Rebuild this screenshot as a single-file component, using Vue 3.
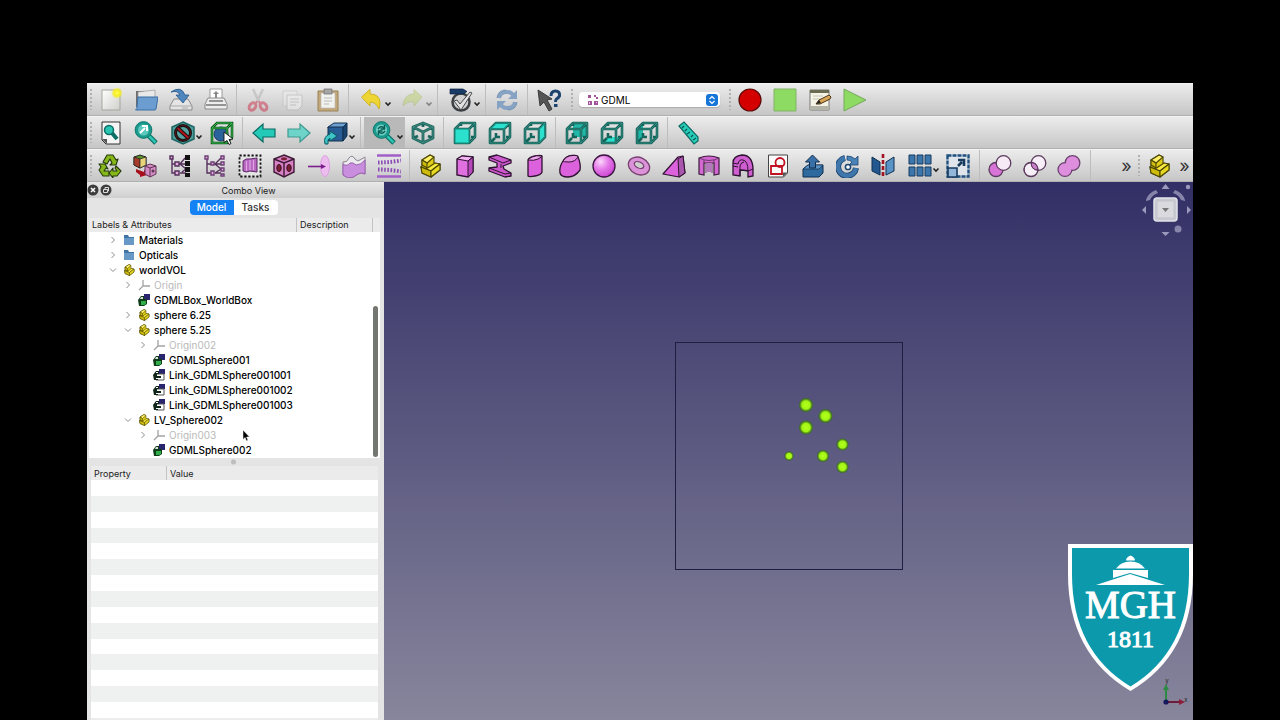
<script setup>
    import { ref } from 'vue';

    const workbench = ref('GDML');
    const activeTab = ref('Model');

    const fileBar = [
        { icon: 'new', label: 'New' },
        { icon: 'open', label: 'Open' },
        { icon: 'save', label: 'Save' },
        { icon: 'print', label: 'Print' },
        { sep: true },
        { icon: 'cut', label: 'Cut', off: true },
        { icon: 'copy', label: 'Copy', off: true },
        { icon: 'paste', label: 'Paste' },
        { sep: true },
        { icon: 'undo', label: 'Undo', drop: true },
        { icon: 'redo', label: 'Redo', drop: true, off: true },
        { sep: true },
        { icon: 'check', label: 'Edit mode', drop: true },
        { sep: true },
        { icon: 'refresh', label: 'Refresh' },
        { sep: true },
        { icon: 'whats', label: 'What is this' },
    ];

    const macroBar = [
        { icon: 'record', label: 'Record macro' },
        { icon: 'stop', label: 'Stop macro' },
        { icon: 'macros', label: 'Macros' },
        { icon: 'play', label: 'Run macro' },
    ];

    const viewBar = [
        { icon: 'fitall', label: 'Fit all' },
        { icon: 'fitsel', label: 'Fit selection' },
        { icon: 'style', label: 'Draw style', drop: true },
        { icon: 'bbox', label: 'Bounding box' },
        { sep: true },
        { icon: 'back', label: 'Back' },
        { icon: 'forward', label: 'Forward' },
        { icon: 'linkto', label: 'Go to linked object', drop: true },
        { sep: true },
        { icon: 'sync', label: 'Sync view', drop: true, on: true },
        { icon: 'iso', label: 'Isometric' },
        { sep: true },
        { icon: 'front', label: 'Front' },
        { icon: 'top', label: 'Top' },
        { icon: 'right', label: 'Right' },
        { sep: true },
        { icon: 'rear', label: 'Rear' },
        { icon: 'bottom', label: 'Bottom' },
        { icon: 'left', label: 'Left' },
        { sep: true },
        { icon: 'measure', label: 'Measure' },
    ];

    const gdmlBar = [
        { icon: 'cycle', label: 'Cycle' },
        { icon: 'expand', label: 'Expand' },
        { icon: 'treeblack', label: 'Expand max' },
        { icon: 'treepink', label: 'Expand one' },
        { icon: 'mesh', label: 'Mesh' },
        { icon: 'dice', label: 'Tessellate' },
        { icon: 'ray', label: 'Ray' },
        { icon: 'surface', label: 'Surface' },
        { icon: 'lines', label: 'Lines' },
        { sep: true },
        { icon: 'part', label: 'Part' },
        { icon: 'box', label: 'Box' },
        { icon: 'xtru', label: 'Extruded' },
        { icon: 'tube', label: 'Elliptical tube' },
        { icon: 'cone', label: 'Elliptical cone' },
        { icon: 'sphere', label: 'Sphere' },
        { icon: 'torus', label: 'Torus' },
        { icon: 'wedge', label: 'Wedge' },
        { icon: 'arch', label: 'Tube segment' },
        { icon: 'bend', label: 'Torus segment' },
        { icon: 'sketch', label: 'Sketch' },
        { icon: 'extrude', label: 'Extrude' },
        { icon: 'revolve', label: 'Revolve' },
        { icon: 'mirror', label: 'Mirror' },
        { icon: 'array', label: 'Array', drop: true },
        { icon: 'scale', label: 'Scale' },
        { sep: true },
        { icon: 'cutop', label: 'Cut solids' },
        { icon: 'common', label: 'Intersection' },
        { icon: 'union', label: 'Union' },
        { sep: true },
    ];

    const tree = [
        { depth: 0, twist: 'closed', icon: 'folder', text: 'Materials' },
        { depth: 0, twist: 'closed', icon: 'folder', text: 'Opticals' },
        { depth: 0, twist: 'open', icon: 'part', text: 'worldVOL' },
        { depth: 1, twist: 'closed', icon: 'origin', text: 'Origin', dim: true },
        { depth: 1, icon: 'solid', text: 'GDMLBox_WorldBox' },
        { depth: 1, twist: 'closed', icon: 'part', text: 'sphere 6.25' },
        { depth: 1, twist: 'open', icon: 'part', text: 'sphere 5.25' },
        { depth: 2, twist: 'closed', icon: 'origin', text: 'Origin002', dim: true },
        { depth: 2, icon: 'solid', text: 'GDMLSphere001' },
        { depth: 2, icon: 'link', text: 'Link_GDMLSphere001001' },
        { depth: 2, icon: 'link', text: 'Link_GDMLSphere001002' },
        { depth: 2, icon: 'link', text: 'Link_GDMLSphere001003' },
        { depth: 1, twist: 'open', icon: 'part', text: 'LV_Sphere002' },
        { depth: 2, twist: 'closed', icon: 'origin', text: 'Origin003', dim: true },
        { depth: 2, icon: 'solid', text: 'GDMLSphere002' },
    ];

    const spheres = [
        { x: 131, y: 63, r: 7 },
        { x: 150.5, y: 74, r: 7 },
        { x: 131, y: 85.5, r: 7 },
        { x: 167.5, y: 102.5, r: 6 },
        { x: 148, y: 114, r: 6 },
        { x: 167.5, y: 125, r: 6 },
        { x: 114, y: 114, r: 4.5 },
    ];
</script>

<template>
    <svg class="sprites" aria-hidden="true">
        <defs>
            <linearGradient id="g-paper" x1="0" y1="0" x2="1" y2="1">
                <stop offset="0" stop-color="#fff" /><stop offset="1" stop-color="#cfcfcb" />
            </linearGradient>
            <radialGradient id="g-ball" cx=".35" cy=".3" r=".8">
                <stop offset="0" stop-color="#fbd6fb" /><stop offset=".45" stop-color="#e579e8" /><stop offset="1" stop-color="#c63ccd" />
            </radialGradient>
            <radialGradient id="g-green">
                <stop offset="0" stop-color="#b4ff1c" /><stop offset=".6" stop-color="#a0f414" /><stop offset=".78" stop-color="#5f9a1c" /><stop offset="1" stop-color="#35602c" />
            </radialGradient>
            <radialGradient id="g-spark">
                <stop offset="0" stop-color="#fffb60" /><stop offset=".5" stop-color="#f5ee20" /><stop offset="1" stop-color="#f5ee20" stop-opacity="0" />
            </radialGradient>
        </defs>

        <symbol id="i-new" viewBox="0 0 24 24">
            <path d="M3 2h18v20H3z" fill="url(#g-paper)" stroke="#a5a5a0" />
            <circle cx="18" cy="5" r="6" fill="url(#g-spark)" />
        </symbol>
        <symbol id="i-open" viewBox="0 0 24 24">
            <path d="M2 3h8l1 2h9v14H2z" fill="#6d6d6d" />
            <path d="M4 4l17-2v9H4z" fill="#e9e9e9" stroke="#999" stroke-width=".7" />
            <path d="M4 9h20l-2 12q-.3 1-1 1H1.500q2-1 1.500-4z" fill="#6c9dd0" stroke="#3a6ea5" />
        </symbol>
        <symbol id="i-save" viewBox="0 0 24 24">
            <path d="M5 11h14l4 7v4H1v-4z" fill="#e4e4e4" stroke="#8b8b8b" />
            <path d="M2 18h20M13 20h6" stroke="#aaa" />
            <path d="M2 4Q12-3 16 7h4l-6 8-7-8h4Q9 2 2 4z" fill="#4f86bd" stroke="#26568a" stroke-width=".8" />
        </symbol>
        <symbol id="i-print" viewBox="0 0 24 24">
            <path d="M6 1h12v11H6z" fill="#fff" stroke="#999" />
            <path d="M12 3l3 3h-2v4h-2V6H9z" fill="#888" />
            <path d="M4 10h16l3 6v5H1v-5z" fill="#eee" stroke="#8a8a8a" />
            <path d="M5 13h14M2 17h20" stroke="#777" stroke-width="1.5" />
        </symbol>
        <symbol id="i-cut" viewBox="0 0 24 24">
            <path d="M7 1l6 13M17 1l-6 13" stroke="#aaa" stroke-width="2.5" />
            <path d="M11 13l-1 3M13 13l1 3" stroke="#cc1d38" stroke-width="2" />
            <ellipse cx="6.5" cy="18.5" rx="3" ry="4" transform="rotate(35 6.5 18.5)" fill="none" stroke="#cc1d38" stroke-width="3" />
            <ellipse cx="17.5" cy="18.5" rx="3" ry="4" transform="rotate(-35 17.5 18.5)" fill="none" stroke="#cc1d38" stroke-width="3" />
        </symbol>
        <symbol id="i-copy" viewBox="0 0 24 24">
            <path d="M2 3h14v15H2z" fill="#eee" stroke="#bbb" />
            <path d="M6 7h15v11l-4 4H6z" fill="#f6f6f6" stroke="#aaa" />
            <path d="M9 11h9M9 14h9M9 17h6" stroke="#aaa" />
        </symbol>
        <symbol id="i-paste" viewBox="0 0 24 24">
            <path d="M2 3h20v20H2z" fill="#c2a97c" stroke="#998257" />
            <path d="M5 5h14v15H5z" fill="#f1f1ee" stroke="#bbb" stroke-width=".6" />
            <path d="M8 1h8v5H8z" fill="#a5a5a5" stroke="#777" stroke-width=".8" />
            <path d="M8 10h8M8 13h8M8 16h5" stroke="#bbb" />
        </symbol>
        <symbol id="i-undo" viewBox="0 0 24 24">
            <path d="M1.500 9L10 1.500v4.500q9 0 10 8 0 4-1 7-3-7-9-7v4z" fill="#edd634" stroke="#d0b224" stroke-linejoin="round" />
        </symbol>
        <symbol id="i-redo" viewBox="0 0 24 24">
            <path d="M21 9L13 1.500v4.500q-10 0-11 12 4-5 11-4v4z" fill="#b8cf62" stroke="#9db655" stroke-linejoin="round" />
        </symbol>
        <symbol id="i-check" viewBox="0 0 24 24">
            <circle cx="12" cy="14" r="8.5" fill="#cfcfcf" stroke="#3c4043" stroke-width="2.5" />
            <path d="M1 1h13l4 2.500L14 6H1z" fill="#183a66" stroke="#0e2443" stroke-width=".7" />
            <path d="M5 13l3-1 3 4L21 4l2 1-11 17z" fill="#e2e2e2" stroke="#4a4a4a" />
        </symbol>
        <symbol id="i-refresh" viewBox="0 0 24 24">
            <path d="M4 10q1-6 8-6 4 0 6 3M20 14q-1 6-8 6-4 0-6-3" fill="none" stroke="#86a3c4" stroke-width="4" />
            <path d="M22 2v9h-9zM2 22v-9h9z" fill="#86a3c4" />
            <path d="M2 10q1-8 9-8M22 14q-1 8-9 8" fill="none" stroke="#6685aa" stroke-width=".8" />
        </symbol>
        <symbol id="i-whats" viewBox="0 0 24 24">
            <path d="M14 8q0-5 4.500-5t4 5q-1 2-3 3-1 1-1 3" fill="none" stroke="#1d436e" stroke-width="3" />
            <path d="M17 16h3.500v3H17z" fill="#1d436e" />
            <path d="M1 2l14 9-5 1 5 9-3 2-5-9-4 4z" fill="#555" stroke="#3b3b3b" />
        </symbol>
        <symbol id="i-wb" viewBox="0 0 12 12">
            <path d="M1 1h3v3H1zM7 1h2v2H7zM9 3h2v2H9zM1 7h4v4H1zM7 7h4v4H7z" fill="#a0559a" />
            <path d="M2 8h1v2H2zM9 8h1v1H9z" fill="#eec1e8" />
        </symbol>
        <symbol id="i-record" viewBox="0 0 24 24"><circle cx="12" cy="12" r="11" fill="#d40000" stroke="#5c0a0a" stroke-width="1.2" /></symbol>
        <symbol id="i-stop" viewBox="0 0 24 24"><path d="M1 1h22v22H1z" fill="#8edb63" stroke="#82b367" /></symbol>
        <symbol id="i-macros" viewBox="0 0 24 24">
            <path d="M2 2h19v20H2z" fill="#f4f3e6" stroke="#777" />
            <path d="M2 2h19v3H2z" fill="#6b6b52" />
            <path d="M2 18h19v4H2z" fill="#b3b3a8" />
            <path d="M5 8h10M5 11h7" stroke="#c5c5b8" />
            <path d="M8 16l3-4L21 7l2 2-1 2-10 5z" fill="#d8a556" stroke="#4b3416" />
            <path d="M8 16l3-4 2 3z" fill="#222" />
        </symbol>
        <symbol id="i-play" viewBox="0 0 24 24"><path d="M1 1l22 11L1 23z" fill="#8edb63" stroke="#75a85c" /></symbol>

        <symbol id="i-fitall" viewBox="0 0 24 24">
            <path d="M3 1h18v22H7l-4-4z" fill="#f5f5f5" stroke="#333" />
            <path d="M3 18l5 5v-5z" fill="#555" />
            <path d="M13 12l5 6" stroke="#0c6f64" stroke-width="4" />
            <circle cx="10" cy="9" r="4.5" fill="#2bc4b3" stroke="#0c6f64" stroke-width="1.5" />
        </symbol>
        <symbol id="i-fitsel" viewBox="0 0 24 24">
            <path d="M14 14l8 8" stroke="#0c6f64" stroke-width="5" />
            <path d="M14.500 14.500l7 7" stroke="#2bc4b3" stroke-width="2.5" />
            <circle cx="9.5" cy="9" r="7" fill="#5cc9be" stroke="#1a9a8d" stroke-width="3" />
            <circle cx="9.5" cy="9" r="8.4" fill="none" stroke="#0c6f64" stroke-width=".8" />
            <path d="M6 12l5-5M8 5h5v5" fill="none" stroke="#fff" stroke-width="2" />
        </symbol>
        <symbol id="i-style" viewBox="0 0 24 24">
            <path d="M12 1l11 5v12l-11 5L1 18V6z" fill="#4f9d9b" stroke="#1c6663" stroke-width="1.5" />
            <circle cx="12" cy="12" r="7.5" fill="#57a29f" stroke="#111" stroke-width="3" />
            <path d="M6.500 7l11 10" stroke="#111" stroke-width="4" />
            <path d="M6.500 7l11 10" stroke="#b3151d" stroke-width="2" />
            <circle cx="12" cy="12" r="7.5" fill="none" stroke="#5c1418" stroke-width="1" />
        </symbol>
        <symbol id="i-bbox" viewBox="0 0 24 24">
            <circle cx="11" cy="13" r="7" fill="#2a629c" stroke="#143a66" />
            <path d="M2 7l5-5h15v14l-5 6H2zM2 7h15v15M17 7l5-5" fill="none" stroke="#0c5a1c" stroke-width="2.6" />
            <path d="M2 7l5-5h15v14l-5 6H2zM2 7h15v15M17 7l5-5" fill="none" stroke="#36b84a" stroke-width="1" />
            <path d="M14 11l9 7-4 .5 2 4-2 1-2-4-3 2z" fill="#fff" stroke="#111" stroke-width=".9" />
        </symbol>
        <symbol id="i-back" viewBox="0 0 24 24"><path d="M1 12L11 3v5h12v8H11v5z" fill="#25c9b8" stroke="#0b6b62" stroke-width="1.2" /></symbol>
        <symbol id="i-forward" viewBox="0 0 24 24"><path d="M23 12L13 3v5H1v8h12v5z" fill="#6ed3c9" stroke="#3e9990" stroke-width="1.2" /></symbol>
        <symbol id="i-linkto" viewBox="0 0 24 24">
            <path d="M4 6l6-4h13l-4 5H4z" fill="#6fa0d0" stroke="#12304f" />
            <path d="M4 6h15v14H4z" fill="#275d94" stroke="#12304f" />
            <path d="M19 6l4-4v13l-4 5z" fill="#19426e" stroke="#12304f" />
            <path d="M1 23q-2-8 5-10v-3l7 5-7 5v-3q-3 1-2 6z" fill="#3cc6c8" stroke="#0b5a62" />
        </symbol>
        <symbol id="i-sync" viewBox="0 0 24 24">
            <path d="M14 14l8 8" stroke="#0c6f64" stroke-width="5" />
            <path d="M14.500 14.500l7 7" stroke="#2bc4b3" stroke-width="2.5" />
            <circle cx="9.5" cy="9" r="7" fill="#6fd0c6" stroke="#1a9a8d" stroke-width="3" />
            <circle cx="9.5" cy="9" r="8.4" fill="none" stroke="#0c6f64" stroke-width=".8" />
            <path d="M6 8q3-4 6-1M13 10q-3 4-6 1M12.500 4v4h-4M6.500 14v-4h4" fill="none" stroke="#0a5c54" stroke-width="1.4" />
        </symbol>
        <symbol id="i-iso" viewBox="0 0 24 24">
            <path d="M12 2l10 4v11l-10 5-10-5V6zM2 6l10 5 10-5M12 11v11M12 2v4M2 17l5-2M22 17l-5-2" fill="none" stroke="#1d665d" stroke-width="2.8" stroke-linejoin="round" />
            <path d="M12 2l10 4v11l-10 5-10-5V6zM2 6l10 5 10-5M12 11v11" fill="none" stroke="#4d9a90" stroke-width=".7" />
        </symbol>
        <symbol id="cube" viewBox="0 0 24 24">
            <path d="M2 8h14v14H2zM2 8l6-6h14l-6 6M22 2v14l-6 6M8 2v3M8 12v4h4M18 16h4M7 17l-5 5" fill="none" stroke="#14665c" stroke-width="2.6" stroke-linejoin="round" />
            <path d="M2 8h14v14H2zM2 8l6-6h14l-6 6M22 2v14l-6 6" fill="none" stroke="#3f968b" stroke-width=".7" />
        </symbol>
        <symbol id="i-front" viewBox="0 0 24 24"><use href="#cube" /><path d="M2 8h14v14H2z" fill="#2be0cc" stroke="#158a7d" /></symbol>
        <symbol id="i-top" viewBox="0 0 24 24"><use href="#cube" /><path d="M3 7.500l5-5h13l-5 5z" fill="#2be0cc" stroke="#158a7d" /></symbol>
        <symbol id="i-right" viewBox="0 0 24 24"><use href="#cube" /><path d="M16.500 8l5-5v12.500l-5 5.500z" fill="#2be0cc" stroke="#158a7d" /></symbol>
        <symbol id="i-rear" viewBox="0 0 24 24"><path d="M8 3h14v13H8z" fill="#21b8a8" /><use href="#cube" /></symbol>
        <symbol id="i-bottom" viewBox="0 0 24 24"><path d="M2 22l6-6h14l-6 6z" fill="#2be0cc" /><use href="#cube" /></symbol>
        <symbol id="i-left" viewBox="0 0 24 24"><path d="M2 8l6-6v14l-6 6z" fill="#21b8a8" /><use href="#cube" /></symbol>
        <symbol id="i-measure" viewBox="0 0 24 24">
            <path d="M2 5l5-4 14 15v4l-4 3z" fill="#27cdbb" stroke="#0b6b62" stroke-width="1.2" />
            <path d="M7 5l-2 2M10 8l-2 2M13 11l-3 2M16 14l-2 2M19 17l-3 2" stroke="#07544c" stroke-width="1.2" />
        </symbol>

        <symbol id="i-cycle" viewBox="0 0 24 24">
            <g fill="#86b81c" stroke="#23380a" stroke-width="1.1" stroke-linejoin="round">
                <path d="M5 8l4-7h6l3 5 2-1-2 6h-6l2-2-2-4-3 5z" />
                <path d="M1 10h6l3 5-2-1-2 3H11v5H5l-4-6 2-3z" />
                <path d="M18 12l5 5-4 5h-4v2l-4-5 4-5v3h4l-2-3z" />
            </g>
        </symbol>
        <symbol id="i-expand" viewBox="0 0 24 24">
            <path d="M1 3l6-2 6 2v8l-6 3-6-3z" fill="#5a8f2c" stroke="#222" />
            <path d="M1 3l6 2v9l-6-3z" fill="#a83a2a" stroke="#222" stroke-width=".7" />
            <path d="M7 5l6-2v8l-6 3z" fill="#e6d37a" stroke="#222" stroke-width=".7" />
            <path d="M3 15l8 3v-3l3 6-7 2v-2l-4-3z" fill="#a80f1c" />
            <path d="M12 12l5-2 6 2v8l-6 3-5-3z" fill="#d58bc4" stroke="#5f3456" />
            <path d="M12 12l5 2 6-2M17 14v9" fill="none" stroke="#5f3456" />
            <circle cx="20" cy="17" r="1.5" fill="#5b3a55" />
        </symbol>
        <symbol id="i-treeblack" viewBox="0 0 24 24">
            <path d="M4 4v15h5M4 10h14M12 10l5-6M12 10l6 5M12 19h6M14 18l4-3" fill="none" stroke="#55305c" stroke-width="1.4" />
            <path d="M2 2h3v3H2zM7 8h4v4H7zM7 17h4v4H7z" fill="#e3b0dd" stroke="#55305c" stroke-width="1.4" />
            <path d="M18 2h3v3h-3zM18 8h3v3h-3zM18 14h3v3h-3zM18 20h3v2h-3z" fill="#111" stroke="#111" stroke-width="2" />
        </symbol>
        <symbol id="i-treepink" viewBox="0 0 24 24">
            <path d="M4 4v15h5M4 10h14M12 10l6-6M12 10l6 5M12 19l6-4M12 19h6" fill="none" stroke="#55305c" stroke-width="1.4" />
            <path d="M2 2h3v3H2zM8 8h3v3H8zM8 17h3v4H8zM18 2h3v3h-3zM18 8h3v3h-3zM18 14h3v3h-3zM18 20h3v2h-3z" fill="#e3b0dd" stroke="#6d3f76" stroke-width="1.4" />
        </symbol>
        <symbol id="i-mesh" viewBox="0 0 24 24">
            <path d="M1.500 1.500h21v21h-21z" fill="#e4e4e4" stroke="#111" stroke-width="1.8" stroke-dasharray="2.2 1.8" />
            <path d="M5 7q3-3 7-2l7-1v14l-7-1q-4 2-7 0z" fill="#b867c0" stroke="#5c2a66" />
            <path d="M8.500 7v10M12 6v10M15.500 6v10" stroke="#dfa3e4" stroke-width="1.2" />
        </symbol>
        <symbol id="i-dice" viewBox="0 0 24 24">
            <path d="M12 1l10 4v13l-10 5L2 18V5z" fill="#d780c3" stroke="#3d1a35" stroke-width="1.4" />
            <path d="M2 5l10 4 10-4M12 9v14" fill="none" stroke="#3d1a35" stroke-width="1.4" />
            <ellipse cx="12" cy="4.8" rx="3" ry="1.5" fill="#7a1f35" />
            <ellipse cx="7" cy="14" rx="2.2" ry="3.6" fill="#7a1f35" stroke="#3d0f1c" />
            <ellipse cx="17" cy="14" rx="2.2" ry="3.6" fill="#7a1f35" stroke="#3d0f1c" />
        </symbol>
        <symbol id="i-ray" viewBox="0 0 24 24">
            <ellipse cx="18" cy="12" rx="4.5" ry="10.5" fill="#eebdf0" stroke="#dda0e2" />
            <path d="M1 12.500h15" stroke="#7b1f8e" stroke-width="1.6" /><path d="M14 10l5 2.500-5 2.500z" fill="#7b1f8e" />
        </symbol>
        <symbol id="i-surface" viewBox="0 0 24 24">
            <path d="M1 8q4 1 6-4 3-4 6 1 2 3 5 1l5-3v17q-4-2-7 0-4 4-10 4l-5-3z" fill="#ececee" stroke="#8d8490" />
            <path d="M1 10q4 3 7-1 3-1 6 2 5 0 9-5v14q-4-2-7 0-4 4-10 4l-5-3z" fill="#ca8ede" stroke="#9a62b0" />
        </symbol>
        <symbol id="i-lines" viewBox="0 0 24 24">
            <path d="M0 1.500h24M0 22.500h24" stroke="#a35fc9" stroke-width="2.6" />
            <path d="M1 8.500Q12 8.500 24 6.500M1 15.500Q12 15.500 24 17.500" fill="none" stroke="#8a4ab5" stroke-width="4" stroke-dasharray="1.6 1.6" />
        </symbol>
        <symbol id="i-part" viewBox="0 0 24 24">
            <g stroke="#4a4503" stroke-width="1.1" stroke-linejoin="round">
                <path d="M4 6l8-5 4 2v6l6 1v6l-9 7-9-4-1-6 1-1z" fill="#e0cd17" />
                <path d="M4 6l8-5 4 2-7 6z" fill="#fff06a" />
                <path d="M4 6l5 3v5l-5-3z" fill="#cfbb0c" />
                <path d="M3 13l5 2 9-6 5 1-9 7z" fill="#f7e83f" />
                <path d="M3 13l10 4v6l-9-4z" fill="#cfbb0c" />
                <path d="M13 17l9-7v6l-9 7z" fill="#e8d823" />
            </g>
        </symbol>
        <symbol id="i-box" viewBox="0 0 24 24">
            <path d="M4 5l5-3 11 1v15l-5 5-11-2z" fill="#e070e0" stroke="#2e1030" stroke-width="1.4" />
            <path d="M4 5l5-3 11 1-5 4z" fill="#f4b4f2" stroke="#2e1030" />
            <path d="M15 7l5-4v15l-5 5z" fill="#b648ba" stroke="#2e1030" />
        </symbol>
        <symbol id="i-xtru" viewBox="0 0 24 24">
            <path d="M1 3l8-2 14 5v3l-8 3 1 3 7 4v3l-6 1L1 17v-3l8-1V9L1 6z" fill="#cb58cc" stroke="#2e1030" stroke-width="1.3" stroke-linejoin="round" />
            <path d="M1 3l14 6 8-3M1 14l16 6 6-1M13 10v4" fill="none" stroke="#2e1030" />
        </symbol>
        <symbol id="i-tube" viewBox="0 0 24 24">
            <path d="M5 6q1-3 7-4t7 0v16q-1 3-7 4t-7 0z" fill="#dc62dd" stroke="#2e1030" stroke-width="1.3" />
            <path d="M5 6q6 1 10-1t4-3q-6-1-10 1T5 6z" fill="#eea6ec" stroke="#2e1030" />
        </symbol>
        <symbol id="i-cone" viewBox="0 0 24 24">
            <path d="M5 7q3-5 9-5.500t6 1.500q3 7 2 13-5 7-12 7t-8-4q-1-6 3-12z" fill="#dc62dd" stroke="#2e1030" stroke-width="1.3" />
            <path d="M5 7q3-5 9-5.500t6 1.500q-3 5-9 5T5 7z" fill="#e48fe2" stroke="#2e1030" />
        </symbol>
        <symbol id="i-sphere" viewBox="0 0 24 24"><circle cx="12" cy="12" r="11" fill="url(#g-ball)" stroke="#3a1440" stroke-width="1.3" /></symbol>
        <symbol id="i-torus" viewBox="0 0 24 24">
            <ellipse cx="12" cy="12" rx="11" ry="8.5" transform="rotate(25 12 12)" fill="#dc92d8" stroke="#76416f" stroke-width="1.3" />
            <ellipse cx="12" cy="11" rx="5" ry="3" transform="rotate(25 12 11)" fill="#cfcfcf" stroke="#76416f" stroke-width="1.3" />
        </symbol>
        <symbol id="i-wedge" viewBox="0 0 24 24">
            <path d="M1 20L16 3l5-1 2 17-6 4z" fill="#dc62dd" stroke="#2e1030" stroke-width="1.2" stroke-linejoin="round" />
            <path d="M16 5l5-3 2 17-6 4z" fill="#a956ad" stroke="#2e1030" />
        </symbol>
        <symbol id="i-arch" viewBox="0 0 24 24">
            <path d="M2 4q10-4 20 0v16l-5 1V9H7v12l-5-1z" fill="#d468d3" stroke="#3a1b3b" stroke-width="1.2" />
            <path d="M2 4q10 5 20 0M7 9V6M17 9V6M9 9v10M15 9v10" fill="none" stroke="#6b3a6b" />
            <path d="M9 9h6v9H9z" fill="#b578bd" />
        </symbol>
        <symbol id="i-bend" viewBox="0 0 24 24">
            <path d="M2 9q0-7 9-8 10 0 11 13v8l-5 1v-6q-4-1-8-1v6l-7-1z" fill="#cf5fd0" stroke="#2e1030" stroke-width="1.3" />
            <path d="M2 9l5 1q1-5 5-4 5 1 5 11M9 22V12q1-4 4-4M2 12l5 1M17 17l5-2" fill="none" stroke="#2e1030" />
        </symbol>
        <symbol id="i-sketch" viewBox="0 0 24 24">
            <path d="M2.500 1h19v18l-4 4h-15z" fill="#fafafa" stroke="#444" />
            <path d="M17 23v-4.500h4.500z" fill="#555" />
            <path d="M5 12h11v8H5z" fill="none" stroke="#c11224" stroke-width="1.8" />
            <circle cx="14" cy="8.5" r="4.5" fill="none" stroke="#c11224" stroke-width="1.8" />
        </symbol>
        <symbol id="i-extrude" viewBox="0 0 24 24">
            <path d="M2 15l5-4h15v8l-4 4H2z" fill="#2f6a9f" stroke="#0f2f50" />
            <path d="M2 15l5-4h15l-4 4z" fill="#5d92c4" stroke="#0f2f50" stroke-width=".7" />
            <path d="M11.500 1l7 7h-4v6h-6V8h-4z" fill="#386fa6" stroke="#0f2f50" />
        </symbol>
        <symbol id="i-revolve" viewBox="0 0 24 24">
            <path d="M9 4A9 9 0 1 0 20 14" fill="none" stroke="#1c456f" stroke-width="6" />
            <path d="M9 4A9 9 0 1 0 20 14" fill="none" stroke="#3f77ac" stroke-width="4.4" />
            <path d="M11 2q5 0 8 3l3-3v9h-9l3-3q-2-2-5-2z" fill="#4a83b8" stroke="#1c456f" stroke-width=".8" />
            <circle cx="12" cy="13" r="2.6" fill="#fff" stroke="#1c456f" stroke-width="1.5" />
        </symbol>
        <symbol id="i-mirror" viewBox="0 0 24 24">
            <path d="M1 3l8 5v13l-8-4z" fill="#22588f" stroke="#0f2f50" />
            <path d="M23 3l-8 5v13l8-4z" fill="#5a93c6" stroke="#0f2f50" />
            <path d="M12 0v24" stroke="#a31222" stroke-width="2.6" stroke-dasharray="4 2" />
        </symbol>
        <symbol id="i-array" viewBox="0 0 24 24">
            <path d="M1 1h6v9H1zM9 1h6v9H9zM17 1h6v9h-6zM1 13h6v9H1zM9 13h6v9H9zM17 13h6v9h-6z" fill="#3b77ad" stroke="#173a5d" />
        </symbol>
        <symbol id="i-scale" viewBox="0 0 24 24">
            <path d="M1.500 1.500h21v21h-21z" fill="#dfe5ea" stroke="#1f507f" stroke-width="2.4" stroke-dasharray="4 1" />
            <path d="M2 14h9v9H2z" fill="#93b7d8" stroke="#173a5d" stroke-width="1.6" />
            <path d="M12 12l4-4M12 6h6v6" fill="none" stroke="#173a5d" stroke-width="2.6" />
        </symbol>
        <symbol id="i-cutop" viewBox="0 0 24 24">
            <circle cx="8" cy="15.5" r="7" fill="#d873d8" stroke="#5b3a5e" stroke-width="1.3" />
            <circle cx="15.5" cy="9" r="7.3" fill="#f7eaf7" stroke="#5b3a5e" stroke-width="1.3" />
        </symbol>
        <symbol id="i-common" viewBox="0 0 24 24">
            <circle cx="8" cy="15.5" r="7" fill="#f7eff7" stroke="#5b3a5e" stroke-width="1.3" />
            <circle cx="15.5" cy="9" r="7.3" fill="#f7eff7" stroke="#5b3a5e" stroke-width="1.3" />
            <path d="M8.300 8.500q6-.5 6.800 7.500-7 0-6.800-7.500z" fill="#c77fc9" stroke="#5b3a5e" />
            <circle cx="8" cy="15.5" r="7" fill="none" stroke="#5b3a5e" />
        </symbol>
        <symbol id="i-union" viewBox="0 0 24 24">
            <g stroke="#6b4370" stroke-width="2.6" fill="#dd8edd"><circle cx="8" cy="15.5" r="6.3" /><circle cx="15.5" cy="9" r="6.7" /></g>
            <g fill="#dd8edd"><circle cx="8" cy="15.5" r="6.3" /><circle cx="15.5" cy="9" r="6.7" /></g>
        </symbol>

        <symbol id="i-folder" viewBox="0 0 12 12">
            <path d="M1 1h4l1 2h5v8H1z" fill="#3f74a5" /><path d="M1 4h10v7H1z" fill="#6899c6" />
        </symbol>
        <symbol id="i-origin" viewBox="0 0 12 12">
            <path d="M5 1v6L1 11M5 7h7" fill="none" stroke="#a2a2a2" stroke-width="1.3" />
        </symbol>
        <symbol id="i-solid" viewBox="0 0 12 12">
            <path d="M6 0h6v6H6z" fill="#29246e" />
            <path d="M0 6l3-4h3v3h3v5l-3 2H1z" fill="#0e3d18" /><path d="M3 7h5v3l-2 1H3z" fill="#2fae4a" /><path d="M3 3h2v2H2z" fill="#ddd" />
        </symbol>
        <symbol id="i-link" viewBox="0 0 12 12">
            <path d="M6 0h6v5H6z" fill="#29246e" /><path d="M3 5h8v6H3z" fill="#fff" stroke="#555" />
            <path d="M0 6l3-4h3v3H4v2h4v2H5v2H1z" fill="#10251a" /><path d="M3 3h2v1H3zM3 9h2v1H3z" fill="#fff" />
        </symbol>
        <symbol id="i-chev" viewBox="0 0 8 6"><path d="M1.500 1.500L4 4l2.500-2.500" fill="none" stroke="#222" stroke-width="1.6" /></symbol>
    </svg>

    <main class="stage">
        <div class="window">
            <header>
                <div class="toolbar" role="toolbar" aria-label="File">
                    <span class="grip"></span>
                    <template v-for="(t, i) in fileBar" :key="i">
                        <span v-if="t.sep" class="sep"></span>
                        <button v-else class="tool" :class="{ drop: t.drop, off: t.off }" :aria-label="t.label">
                            <svg class="icon"><use :href="'#i-' + t.icon" /></svg>
                            <svg v-if="t.drop" class="chev"><use href="#i-chev" /></svg>
                        </button>
                    </template>
                    <span class="grip wide"></span>
                    <label class="workbench">
                        <svg class="wbIcon"><use href="#i-wb" /></svg>
                        <select v-model="workbench" aria-label="Workbench">
                            <option>GDML</option>
                        </select>
                        <svg class="stepper" viewBox="0 0 12 12">
                            <rect width="12" height="12" rx="3" fill="#1676d8" />
                            <path d="M3.500 5L6 2.500 8.500 5M3.500 7L6 9.500 8.500 7" fill="none" stroke="#fff" stroke-width="1.2" />
                        </svg>
                    </label>
                    <span class="grip"></span>
                    <button v-for="t in macroBar" :key="t.icon" class="tool" :aria-label="t.label">
                        <svg class="icon"><use :href="'#i-' + t.icon" /></svg>
                    </button>
                </div>

                <div class="toolbar" role="toolbar" aria-label="View">
                    <span class="grip"></span>
                    <template v-for="(t, i) in viewBar" :key="i">
                        <span v-if="t.sep" class="sep"></span>
                        <button v-else class="tool" :class="{ drop: t.drop, on: t.on }" :aria-label="t.label">
                            <svg class="icon"><use :href="'#i-' + t.icon" /></svg>
                            <svg v-if="t.drop" class="chev"><use href="#i-chev" /></svg>
                        </button>
                    </template>
                </div>

                <div class="toolbar" role="toolbar" aria-label="GDML">
                    <div class="fill">
                        <span class="grip"></span>
                        <template v-for="(t, i) in gdmlBar" :key="i">
                            <span v-if="t.sep" class="sep"></span>
                            <button v-else class="tool" :class="{ drop: t.drop }" :aria-label="t.label">
                                <svg class="icon"><use :href="'#i-' + t.icon" /></svg>
                                <svg v-if="t.drop" class="chev"><use href="#i-chev" /></svg>
                            </button>
                        </template>
                    </div>
                    <div class="overflow">
                        <button class="more" aria-label="More tools">»</button>
                        <span class="grip"></span>
                        <button class="tool" aria-label="Create part">
                            <svg class="icon"><use href="#i-part" /></svg>
                        </button>
                        <button class="more" aria-label="More part tools">»</button>
                    </div>
                </div>
            </header>

            <div class="body">
                <aside class="combo">
                    <div class="title">
                        <button aria-label="Close">
                            <svg viewBox="0 0 12 12"><circle cx="6" cy="6" r="5.5" fill="#3d3d3d" /><path d="M4 4l4 4M8 4L4 8" stroke="#fff" stroke-width="1.5" /></svg>
                        </button>
                        <button aria-label="Float">
                            <svg viewBox="0 0 12 12"><circle cx="6" cy="6" r="5.5" fill="#3d3d3d" /><path d="M3.500 5.500h4v3h-4zM5 5.500v-2h3.500v3.500h-1" fill="none" stroke="#ddd" /></svg>
                        </button>
                        <h2>Combo View</h2>
                    </div>
                    <div class="tabs" role="tablist">
                        <button
                        v-for="tab in ['Model', 'Tasks']"
                        :key="tab"
                        role="tab"
                        :aria-selected="activeTab === tab"
                        :class="{ active: activeTab === tab }"
                        @click="activeTab = tab">{{ tab }}</button>
                    </div>

                    <div class="treeHead">
                        <span>Labels &amp; Attributes</span>
                        <span>Description</span>
                    </div>
                    <div class="treeBox">
                        <ul class="tree">
                            <li v-for="node in tree" :key="node.text" :class="['depth' + node.depth, { dim: node.dim }]">
                                <button v-if="node.twist" class="twist" :class="node.twist" :aria-label="'Toggle ' + node.text">
                                    <svg viewBox="0 0 8 8"><path d="M2.500 1L5.500 4l-3 3" fill="none" stroke="#8c8c8c" /></svg>
                                </button>
                                <span v-else class="twist"></span>
                                <svg class="nodeIcon"><use :href="'#i-' + node.icon" /></svg>
                                <span>{{ node.text }}</span>
                            </li>
                        </ul>
                        <div class="track"><div class="thumb"></div></div>
                    </div>

                    <div class="splitter"></div>

                    <div class="props">
                        <table>
                            <thead>
                                <tr><th>Property</th><th>Value</th></tr>
                            </thead>
                            <tbody>
                                <tr v-for="n in 15" :key="n"><td></td><td></td></tr>
                            </tbody>
                        </table>
                    </div>
                </aside>

                <section class="view" aria-label="3D view">
                    <svg class="scene" viewBox="0 0 228 228">
                        <rect x=".5" y=".5" width="227" height="227" fill="none" stroke="#201d42" />
                        <circle v-for="(s, i) in spheres" :key="i" :cx="s.x" :cy="s.y" :r="s.r" fill="url(#g-green)" />
                    </svg>

                    <svg class="navCube" viewBox="0 0 52 54">
                        <g fill="#9c9abc">
                            <path d="M24.500 1l4 5h-8zM24.500 53l4-4h-8zM1 27l4-4v8zM50 27l-4-4v8z" />
                            <path d="M5 17q2-7 10-10l2 3q-6 2-8 7l-4 1zM44 17q-2-7-10-10l-2 3q6 2 8 7l4 1z" opacity=".8" />
                            <circle cx="47" cy="4" r="2.2" />
                            <circle cx="37" cy="46" r="3.5" opacity=".8" />
                        </g>
                        <rect x="13" y="15" width="23" height="23" rx="3" fill="#c9c9d2" stroke="#e2e2ea" stroke-width="1.5" />
                        <rect x="16" y="18" width="17" height="17" rx="1" fill="#d9d9de" stroke="#c3c3cc" />
                        <path d="M21 25h7l-3.500 4z" fill="#777" />
                    </svg>

                    <svg class="shield" viewBox="0 0 125 147">
                        <path d="M0 0h125v30q0 80-62.500 117Q0 110 0 30z" fill="#fff" />
                        <path d="M4 4h117v26q0 77-58.500 112.500Q4 107 4 30z" fill="#0c99ab" />
                        <g fill="#fff">
                            <path d="M28 41l34-11 35 11z" />
                            <path d="M45 26h35v8l-18-5-17 5z" />
                            <path d="M48 24.500q5-7 14.500-7t14.500 7z" />
                            <path d="M58 16.500q0-3 4.500-5 4.500 2 4.500 5z" />
                        </g>
                        <text class="mgh" x="62.500" y="74" text-anchor="middle">MGH</text>
                        <text class="year" x="62.500" y="103" text-anchor="middle">1811</text>
                    </svg>

                    <svg class="axes" viewBox="0 0 28 32">
                        <path d="M5 25V12" stroke="#2c8a45" stroke-width="2" /><path d="M5 8l3 6H2z" fill="#2c8a45" />
                        <path d="M5 26h14" stroke="#6e1a3b" stroke-width="2" /><path d="M24 26l-6-3v6z" fill="#8c1d38" />
                        <circle cx="5" cy="26" r="2.6" fill="#141a5c" />
                        <text x="6" y="7" text-anchor="middle">y</text>
                        <text x="25" y="26" text-anchor="middle">x</text>
                    </svg>
                </section>

                <svg class="pointer" viewBox="0 0 8 13"><path d="M1 1v9.500l2-2 1.500 3.500 1.500-.7L4.600 8H7.500z" fill="#000" stroke="#fff" stroke-width=".5" /></svg>
            </div>
        </div>
    </main>
</template>

<style>
    body {
        background: #000;
        overflow: hidden;
    }
</style>

<style scoped>
    .sprites {
        position: absolute;
        width: 0;
        height: 0;
    }

    .stage {
        box-sizing: border-box;
        height: 100vh;
        padding: 83px 87px 0;
        background: #000;
        display: flex;
        font-family: Inter, "Liberation Sans", sans-serif;
        font-size: 10px;
        color: #000;
    }

    .window {
        flex: 1;
        min-width: 0;
        display: flex;
        flex-direction: column;
        background: #e4e4e4;
    }

    button {
        border: 0;
        padding: 0;
        background: none;
        font: inherit;
        color: inherit;
    }

    svg {
        display: block;
        flex: none;
    }

    /* toolbars */
    .toolbar {
        box-sizing: border-box;
        height: 33px;
        display: flex;
        align-items: center;
        background: linear-gradient(#ececec, #c6c6c6);
        border-top: 1px solid #f3f3f3;
        border-bottom: 1px solid #b0b0b0;
    }

    .fill {
        flex: 1;
        min-width: 0;
        display: flex;
        align-items: center;
    }

    .overflow {
        flex: none;
        display: flex;
        align-items: center;
        padding-left: 24px;
    }

    .overflow .tool {
        flex: none;
        width: 35px;
    }

    .grip {
        flex: none;
        width: 2px;
        height: 21px;
        margin: 0 1px 0 3px;
        background: repeating-linear-gradient(#b0b0b0 0 2px, transparent 2px 4px);
    }

    .grip.wide {
        margin: 0 6px 0 5px;
    }

    .sep {
        flex: none;
        width: 7px;
        height: 31px;
        background: linear-gradient(#bdbdbd, #bdbdbd) 3px 0 / 1px 100% no-repeat;
    }

    .tool {
        flex: 0 1 35px;
        min-width: 26px;
        height: 31px;
        display: flex;
        align-items: center;
        justify-content: center;
    }

    .tool.drop {
        flex-basis: 41px;
        justify-content: flex-end;
    }

    .tool.on {
        background: #b9b9b9;
    }

    .tool.off {
        opacity: 0.45;
    }

    .icon {
        width: 24px;
        height: 24px;
    }

    .chev {
        width: 8px;
        height: 6px;
        margin: 8px 1px 0 0;
    }

    .more {
        flex: none;
        width: 17px;
        font-size: 18px;
        line-height: 20px;
        text-align: center;
        color: #333;
    }

    .workbench {
        box-sizing: border-box;
        width: 141px;
        height: 15px;
        margin-right: 6px;
        padding: 0 2px 0 8px;
        display: flex;
        align-items: center;
        gap: 2px;
        background: #fff;
        border-radius: 4px;
        box-shadow: 0 1px 1px #aaa;
    }

    .workbench select {
        flex: 1;
        appearance: none;
        border: 0;
        padding: 0;
        background: none;
        font: inherit;
        color: inherit;
    }

    .wbIcon,
    .stepper {
        width: 12px;
        height: 12px;
    }

    .body {
        position: relative;
        flex: 1;
        min-height: 0;
        display: flex;
    }

    /* combo view */
    .combo {
        box-sizing: border-box;
        width: 297px;
        display: flex;
        flex-direction: column;
        padding-right: 4px;
        background: #e4e4e4;
    }

    .title {
        height: 16px;
        margin-right: -4px;
        display: flex;
        align-items: center;
        gap: 1px;
        background: linear-gradient(#e9e9e9, #cfcfcf);
    }

    .title svg {
        width: 12px;
        height: 12px;
    }

    .title h2 {
        flex: 1;
        margin: 0;
        font-size: 9px;
        font-weight: 400;
        text-align: center;
        color: #222;
    }

    .tabs {
        height: 18px;
        padding-bottom: 2px;
        display: flex;
        justify-content: center;
        align-items: center;
    }

    .tabs button {
        width: 44px;
        height: 15px;
        background: #fff;
        font-weight: 500;
        color: #333;
    }

    .tabs button:first-child {
        border-radius: 4px 0 0 4px;
    }

    .tabs button:last-child {
        border-radius: 0 4px 4px 0;
    }

    .tabs button.active {
        background: #1481f5;
        color: #fff;
    }

    .treeHead {
        height: 14px;
        margin-left: 2px;
        padding-right: 7px;
        display: grid;
        grid-template-columns: 1fr 76px;
        line-height: 13px;
        font-size: 9px;
        color: #222;
        background: #ebebeb;
    }

    .treeHead span {
        padding-left: 3px;
        border-right: 1px solid #c4c4c4;
    }

    .treeBox {
        margin-left: 2px;
        display: flex;
        background: #fff;
    }

    .tree {
        flex: 1;
        margin: 0;
        padding: 0 0 1px;
        list-style: none;
        font-weight: 500;
    }

    .tree li {
        height: 15px;
        display: flex;
        align-items: center;
    }

    .depth0 {
        padding-left: 17px;
    }

    .depth1 {
        padding-left: 32px;
    }

    .depth2 {
        padding-left: 47px;
    }

    .dim {
        color: #b9b9b9;
        font-weight: 400;
    }

    .twist {
        width: 14px;
        display: flex;
        justify-content: center;
    }

    .twist svg {
        width: 8px;
        height: 8px;
    }

    .twist.open svg {
        transform: rotate(90deg);
    }

    .nodeIcon {
        width: 12px;
        height: 12px;
        margin: 0 4px 0 3px;
    }

    .track {
        width: 7px;
        display: flex;
        align-items: flex-end;
        padding-bottom: 1px;
    }

    .thumb {
        width: 5px;
        height: 67%;
        border-radius: 3px;
        background: #747672;
    }

    .splitter {
        height: 8px;
        background: radial-gradient(circle, #bdbdbd 0 2px, transparent 3px);
    }

    .props {
        flex: 1;
        min-height: 0;
        margin: 0 2px 0 4px;
        border-bottom: 2px solid #ececec;
    }

    .props table {
        width: 100%;
        height: 100%;
        border-collapse: collapse;
        table-layout: fixed;
        background: #fff;
    }

    .props th {
        height: 14px;
        padding: 0 0 0 3px;
        line-height: 13px;
        font-size: 9px;
        font-weight: 400;
        text-align: left;
        color: #222;
        background: #ebebeb;
    }

    .props th:first-child {
        width: 72px;
        border-right: 1px solid #c4c4c4;
    }

    .props td {
        padding: 0;
    }

    .props tbody tr:nth-child(even) {
        background: #eff1f0;
    }

    /* 3D view */
    .view {
        position: relative;
        flex: 1;
        min-width: 0;
        box-sizing: border-box;
        padding-top: 10px;
        display: grid;
        place-items: center;
        background: linear-gradient(#322f66, #88869c);
    }

    .scene {
        width: 228px;
        height: 228px;
    }

    .navCube {
        position: absolute;
        top: 1px;
        right: 0;
        width: 52px;
        height: 54px;
    }

    .shield {
        position: absolute;
        right: 0;
        bottom: 29px;
        width: 125px;
        height: 147px;
    }

    .shield text {
        font-family: "Liberation Serif", serif;
        fill: #fff;
        stroke: #fff;
    }

    .mgh {
        font-size: 39px;
        stroke-width: 1;
    }

    .year {
        font-size: 24px;
        stroke-width: 1;
    }

    .axes {
        position: absolute;
        right: 4px;
        bottom: 12px;
        width: 28px;
        height: 32px;
        overflow: visible;
    }

    .axes text {
        font-size: 6px;
        fill: #222;
    }

    .pointer {
        position: absolute;
        left: 155px;
        top: 247px;
        width: 8px;
        height: 13px;
    }
</style>
